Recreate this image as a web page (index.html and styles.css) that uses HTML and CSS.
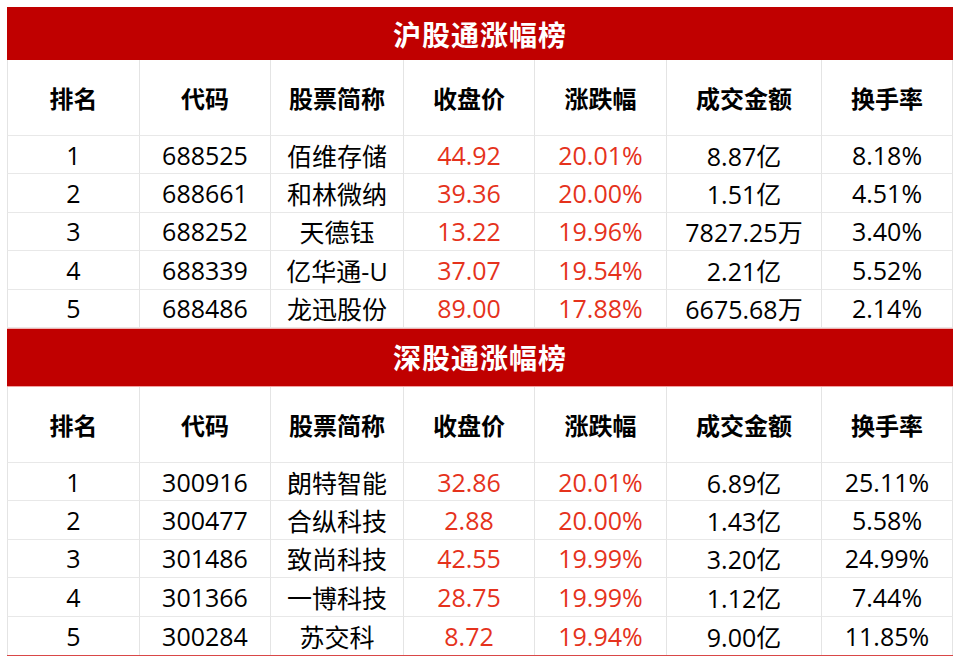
FILE: index.html
```html
<!DOCTYPE html>
<html lang="zh-CN">
<head>
<meta charset="utf-8">
<title>沪深股通涨幅榜</title>
<link rel="stylesheet" href="styles.css">
</head>
<body>
<div class="board">
  <section class="rank rank-sh">
    <div class="title">沪股通涨幅榜</div>
    <div class="cell head">排名</div><div class="cell head">代码</div><div class="cell head">股票简称</div><div class="cell head">收盘价</div><div class="cell head">涨跌幅</div><div class="cell head">成交金额</div><div class="cell head">换手率</div>
    <div class="cell">1</div><div class="cell">688525</div><div class="cell">佰维存储</div><div class="cell up">44.92</div><div class="cell up">20.01%</div><div class="cell">8.87亿</div><div class="cell">8.18%</div>
    <div class="cell">2</div><div class="cell">688661</div><div class="cell">和林微纳</div><div class="cell up">39.36</div><div class="cell up">20.00%</div><div class="cell">1.51亿</div><div class="cell">4.51%</div>
    <div class="cell">3</div><div class="cell">688252</div><div class="cell">天德钰</div><div class="cell up">13.22</div><div class="cell up">19.96%</div><div class="cell">7827.25万</div><div class="cell">3.40%</div>
    <div class="cell">4</div><div class="cell">688339</div><div class="cell">亿华通-U</div><div class="cell up">37.07</div><div class="cell up">19.54%</div><div class="cell">2.21亿</div><div class="cell">5.52%</div>
    <div class="cell">5</div><div class="cell">688486</div><div class="cell">龙迅股份</div><div class="cell up">89.00</div><div class="cell up">17.88%</div><div class="cell">6675.68万</div><div class="cell">2.14%</div>
  </section>
  <section class="rank rank-sz">
    <div class="title">深股通涨幅榜</div>
    <div class="cell head">排名</div><div class="cell head">代码</div><div class="cell head">股票简称</div><div class="cell head">收盘价</div><div class="cell head">涨跌幅</div><div class="cell head">成交金额</div><div class="cell head">换手率</div>
    <div class="cell">1</div><div class="cell">300916</div><div class="cell">朗特智能</div><div class="cell up">32.86</div><div class="cell up">20.01%</div><div class="cell">6.89亿</div><div class="cell">25.11%</div>
    <div class="cell">2</div><div class="cell">300477</div><div class="cell">合纵科技</div><div class="cell up">2.88</div><div class="cell up">20.00%</div><div class="cell">1.43亿</div><div class="cell">5.58%</div>
    <div class="cell">3</div><div class="cell">301486</div><div class="cell">致尚科技</div><div class="cell up">42.55</div><div class="cell up">19.99%</div><div class="cell">3.20亿</div><div class="cell">24.99%</div>
    <div class="cell">4</div><div class="cell">301366</div><div class="cell">一博科技</div><div class="cell up">28.75</div><div class="cell up">19.99%</div><div class="cell">1.12亿</div><div class="cell">7.44%</div>
    <div class="cell">5</div><div class="cell">300284</div><div class="cell">苏交科</div><div class="cell up">8.72</div><div class="cell up">19.94%</div><div class="cell">9.00亿</div><div class="cell">11.85%</div>
  </section>
</div>
</body>
</html>
```

FILE: styles.css
```css
* { box-sizing: border-box; }
html, body { margin: 0; padding: 0; background: #ffffff; }
body {
  font-family: "Open Sans", "Noto Sans CJK SC", sans-serif;
  color: #000;
}
.board {
  width: 946px;
  margin: 7px 0 0 7px;
  border-bottom: 1px solid #d94848;
}
.rank {
  display: grid;
  grid-template-columns: 132px 131px 133px 131px 132px 155px 132px;
}
.rank-sh { grid-template-rows: 53px 76px repeat(5, 38.4px); }
.rank-sz { grid-template-rows: 59px 76px repeat(5, 38.4px); }
.title {
  grid-column: 1 / -1;
  background: #c00000;
  color: #fff;
  font-family: "Noto Sans CJK SC", sans-serif;
  font-weight: 700;
  font-size: 28px;
  display: flex;
  align-items: center;
  justify-content: center;
  letter-spacing: 1px;
}
.rank-sz .title {
  border-top: 1px solid #f0b4b4;
  border-bottom: 1px solid #f2a0a0;
}
.cell {
  display: flex;
  align-items: center;
  justify-content: center;
  font-size: 25px;
  border-left: 1px solid #e4e4e4;
  border-bottom: 1px solid #e8e8e8;
  white-space: nowrap;
}
.cell:nth-child(7n+1) { border-right: 1px solid #e4e4e4; }
.rank-sz .cell:nth-last-child(-n+7) { border-bottom: none; }
.head {
  font-family: "Noto Sans CJK SC", sans-serif;
  font-weight: 700;
  font-size: 24px;
}
.up { color: #e5321c; }
```
